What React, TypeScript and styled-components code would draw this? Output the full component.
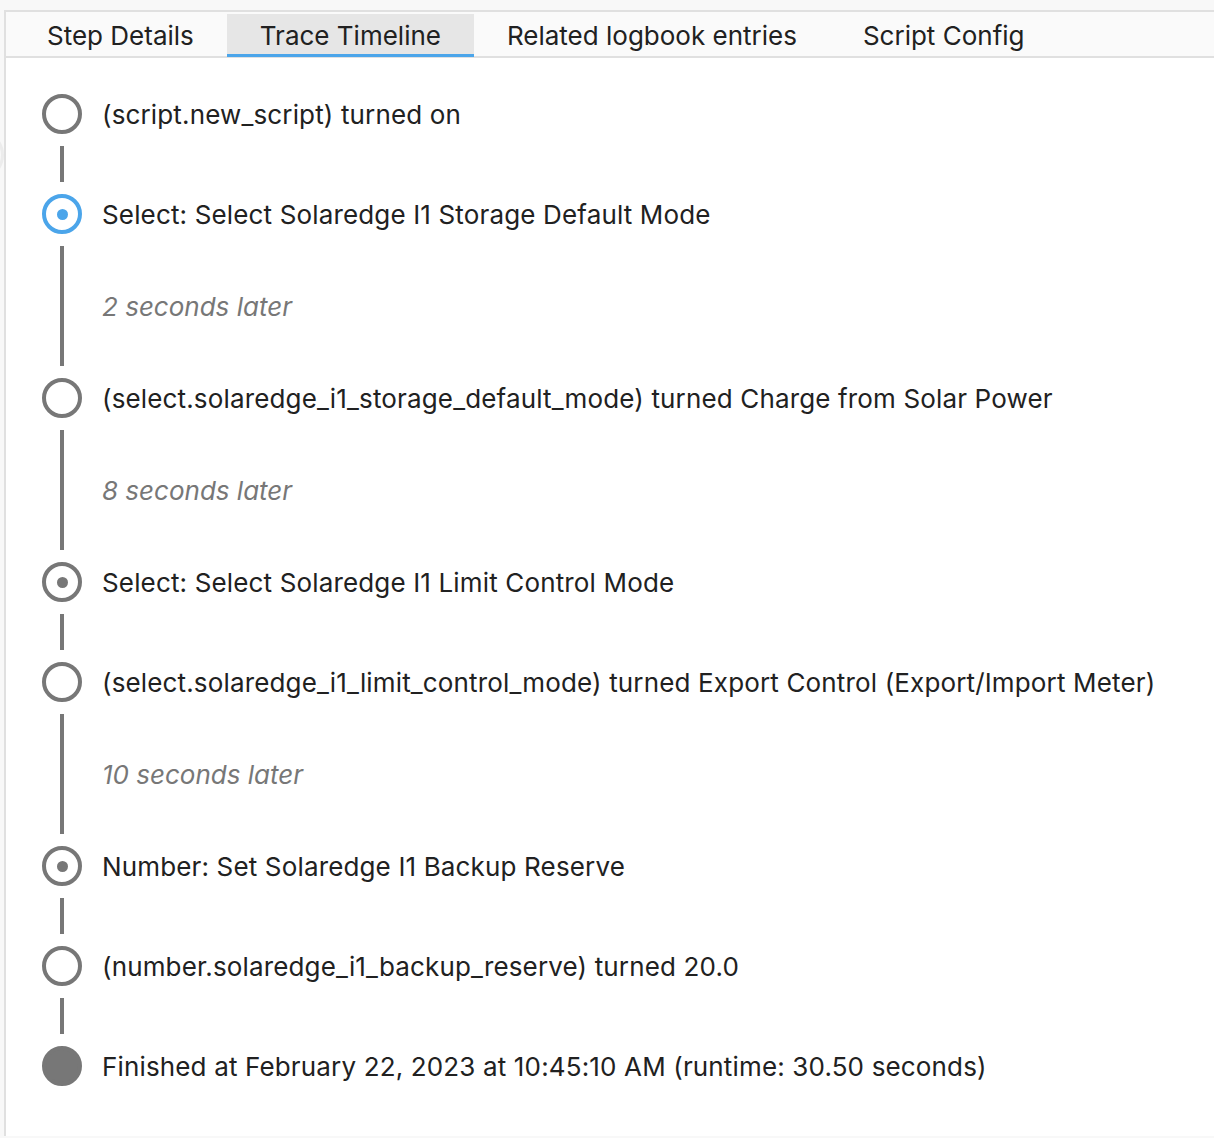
import styled, { createGlobalStyle } from "styled-components";

const GlobalStyle = createGlobalStyle`
  html, body {
    margin: 0;
    padding: 0;
    background: #f8f8f8;
    font-family: Inter, Roboto, "Liberation Sans", sans-serif;
  }
`;

const colors = {
  text: "#212121",
  muted: "#777777",
  blue: "#4ba5ea",
  border: "#e0e0e0",
};

const Page = styled.div`
  padding-top: 10px;
  padding-left: 4px;
  min-height: 1138px;
  box-sizing: border-box;
  position: relative;
  overflow: hidden;
`;

const Ghost = styled.div`
  position: absolute;
  left: -46px;
  top: 130px;
  width: 50px;
  height: 50px;
  border-radius: 50%;
  border: 3px solid #ececec;
  box-sizing: border-box;
`;

const Panel = styled.div`
  background: #ffffff;
  border-top: 2px solid ${colors.border};
  border-left: 2px solid ${colors.border};
  min-height: 1126px;
  box-sizing: border-box;
`;

const TabBar = styled.div`
  display: flex;
  align-items: flex-end;
  height: 44px;
  padding-left: 8px;
  background: #fafafa;
  border-bottom: 2px solid ${colors.border};
`;

const Tab = styled.div<{ $active?: boolean }>`
  height: 43px;
  padding: 0 33px;
  display: flex;
  align-items: center;
  font-size: 26px;
  color: ${colors.text};
  background: ${(p) => (p.$active ? "#e6e6e6" : "transparent")};
  box-shadow: ${(p) => (p.$active ? `inset 0 -3px 0 ${colors.blue}` : "none")};
  margin-bottom: -1px;
  box-sizing: border-box;
`;

const Timeline = styled.div`
  padding: 36px 36px 40px;
  display: flex;
  flex-direction: column;
`;

const Row = styled.div`
  display: flex;
  align-items: center;
  gap: 20px;
  min-height: 40px;
`;

const IconCol = styled.div`
  width: 40px;
  flex: none;
  display: flex;
  justify-content: center;
`;

const Circle = styled.div<{ $color: string; $filled?: boolean; $dot?: boolean }>`
  width: 40px;
  height: 40px;
  border-radius: 50%;
  box-sizing: border-box;
  border: 4px solid ${(p) => p.$color};
  background: ${(p) => (p.$filled ? p.$color : "transparent")};
  display: flex;
  align-items: center;
  justify-content: center;
  &::after {
    content: "";
    display: ${(p) => (p.$dot ? "block" : "none")};
    width: 11px;
    height: 11px;
    border-radius: 50%;
    background: ${(p) => p.$color};
  }
`;

const Connector = styled.div<{ $long?: boolean }>`
  display: flex;
  align-items: center;
  gap: 20px;
  padding: 12px 0;
  height: ${(p) => (p.$long ? 120 : 36)}px;
`;

const LineCol = styled(IconCol)`
  height: 100%;
`;

const Line = styled.div`
  width: 4px;
  height: 100%;
  background: ${colors.muted};
`;

const Label = styled.span`
  font-size: 26px;
  letter-spacing: 0.15px;
  color: ${colors.text};
  white-space: nowrap;
`;

const Delay = styled.span`
  font-size: 26px;
  font-style: italic;
  color: ${colors.muted};
`;

type Kind = "open" | "active" | "dot" | "done";

type Entry = { kind: Kind; text: string; delay?: string };

const entries: Entry[] = [
  { kind: "open", text: "(script.new_script) turned on" },
  { kind: "active", text: "Select: Select Solaredge I1 Storage Default Mode", delay: "2 seconds later" },
  { kind: "open", text: "(select.solaredge_i1_storage_default_mode) turned Charge from Solar Power", delay: "8 seconds later" },
  { kind: "dot", text: "Select: Select Solaredge I1 Limit Control Mode" },
  { kind: "open", text: "(select.solaredge_i1_limit_control_mode) turned Export Control (Export/Import Meter)", delay: "10 seconds later" },
  { kind: "dot", text: "Number: Set Solaredge I1 Backup Reserve" },
  { kind: "open", text: "(number.solaredge_i1_backup_reserve) turned 20.0" },
  { kind: "done", text: "Finished at February 22, 2023 at 10:45:10 AM (runtime: 30.50 seconds)" },
];

const Icon = ({ kind }: { kind: Kind }) => {
  if (kind === "active") return <Circle $color={colors.blue} $dot />;
  if (kind === "dot") return <Circle $color={colors.muted} $dot />;
  if (kind === "done") return <Circle $color={colors.muted} $filled />;
  return <Circle $color={colors.muted} />;
};

const tabs = ["Step Details", "Trace Timeline", "Related logbook entries", "Script Config"];

export default function App() {
  return (
    <>
      <GlobalStyle />
      <Page>
        <Ghost />
        <Panel>
          <TabBar>
            {tabs.map((t) => (
              <Tab key={t} $active={t === "Trace Timeline"}>
                {t}
              </Tab>
            ))}
          </TabBar>
          <Timeline>
            {entries.map((e, i) => (
              <div key={i}>
                <Row>
                  <IconCol>
                    <Icon kind={e.kind} />
                  </IconCol>
                  <Label>{e.text}</Label>
                </Row>
                {i < entries.length - 1 && (
                  <Connector $long={!!e.delay}>
                    <LineCol>
                      <Line />
                    </LineCol>
                    {e.delay && <Delay>{e.delay}</Delay>}
                  </Connector>
                )}
              </div>
            ))}
          </Timeline>
        </Panel>
      </Page>
    </>
  );
}
